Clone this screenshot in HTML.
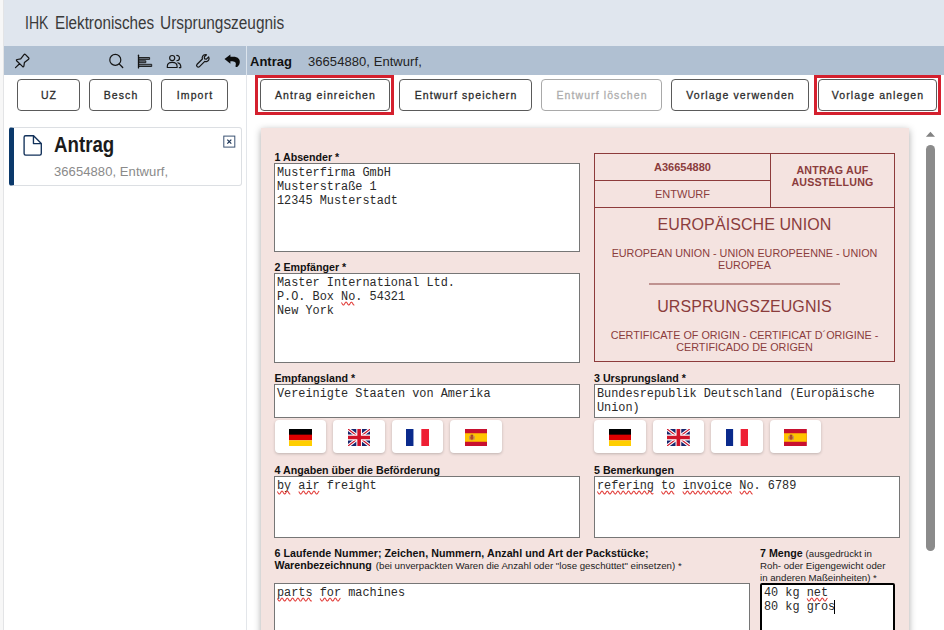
<!DOCTYPE html>
<html>
<head>
<meta charset="utf-8">
<title>IHK Elektronisches Ursprungszeugnis</title>
<style>
*{box-sizing:border-box;margin:0;padding:0}
html,body{width:944px;height:630px;overflow:hidden;background:#fff;font-family:"Liberation Sans",sans-serif;color:#222}
.abs{position:absolute}
#strip{left:0;top:0;width:4px;height:630px;background:#f7f7f7;border-right:1px solid #e3e4e6}
#hdr{left:4px;top:0;width:940px;height:46px;background:#e0e6ee}
.title{left:25.5px;top:13px;font-size:17.6px;color:#3a3a3a;white-space:nowrap;transform-origin:0 0}
#tb{left:4px;top:46px;width:940px;height:29px;background:#b0c0d2}
#vdiv{left:246px;top:46px;width:1px;height:584px;background:#e3e6ea}
#vdiv2{left:246px;top:46px;width:1px;height:29px;background:#dce4ed}
.btn{position:absolute;top:79px;height:32px;border:1px solid #5a5a5a;border-radius:4px;background:#fff;font-size:10.500px;font-weight:normal;-webkit-text-stroke:.28px currentColor;color:#2b2b2b;text-align:center;line-height:31px;letter-spacing:1.100px;padding-left:1px;white-space:nowrap}
.btn.dis{border-color:#a9a9a9;color:#adadad}
.red{position:absolute;top:75px;height:40px;border:3px solid #d4202e}
#card{left:9px;top:127px;width:233px;height:59px;border:1px solid #dcdfe3;border-left:5px solid #0b396b;border-radius:3px;background:#fff}
#form{left:261px;top:128px;width:648px;height:520px;background:#f4e3e0;box-shadow:0 2px 7px rgba(0,0,0,.34)}
.lbl{position:absolute;font-size:10.67px;font-weight:bold;color:#111;white-space:nowrap}
.lbl span{font-weight:normal;font-size:9.700px;color:#1c1c1c}
.ta{position:absolute;background:#fff;border:1px solid #767676;font-family:"Liberation Mono",monospace;font-size:11.87px;line-height:14px;color:#2a2a2a;padding:2px 2px 0 2px;white-space:pre}

#cert{position:absolute;left:594px;top:153px;width:301px;height:209px;border:1px solid #8d3b3b;color:#8b3c3c;text-align:center}
#cert div{position:absolute;white-space:nowrap}
.fb{position:absolute;top:420px;width:51px;height:33px;background:#fff;border-radius:4px;box-shadow:0 1px 3px rgba(0,0,0,.22)}
.fb svg{position:absolute;left:14px;top:9px;width:23px;height:17px}
</style>
</head>
<body>
<div class="abs" id="strip"></div>
<div class="abs" id="hdr"></div>
<div class="abs title" style="left:25px;transform:scaleX(.8)">IHK</div><div class="abs title" style="left:54.600px;transform:scaleX(.866)">Elektronisches</div><div class="abs title" style="left:159.5px;transform:scaleX(.876)">Ursprungszeugnis</div>
<div class="abs" id="tb"></div>
<div class="abs" style="left:250px;top:54px;font-size:13px;font-weight:bold;color:#111;white-space:nowrap">Antrag</div>
<div class="abs" style="left:308px;top:54px;font-size:13px;color:#222;white-space:nowrap;letter-spacing:.06px">36654880, Entwurf,</div>
<svg class="abs" style="left:0;top:46px" width="250" height="29" viewBox="0 46 250 29" fill="none" stroke="#151515" stroke-linecap="round" stroke-linejoin="round">
<path d="M16.6 60.700Q16 59.700 17.200 59.500L20.700 58.900L24 54.600Q24.700 53.900 25.500 54.600L28.600 57.700Q29.300 58.500 28.600 59.200L24.400 62.600L23.900 66Q23.700 67.200 22.700 66.600Z M19.500 63.800L15.500 67.600" stroke-width="1.25"/>
<circle cx="115.300" cy="59.900" r="5.500" stroke-width="1.2"/><path d="M119.400 64.100L122.700 67.500" stroke-width="1.35"/>
<path d="M138.500 55.200V67.900" stroke-width="1.3"/>
<g stroke-width=".9" fill="#151515" fill-opacity=".45"><rect x="139.200" y="57.500" width="10.400" height="1.900"/><rect x="139.200" y="60.800" width="6.600" height="1.900"/><rect x="139.200" y="64.300" width="12.500" height="2.200"/></g>
<g stroke-width="1.15"><circle cx="172.200" cy="58" r="2.550"/><path d="M167.300 67.500v-1.100c0-2.500 1.800-4 4.900-4s4.900 1.500 4.900 4v1.100z"/><path d="M176.800 55.400a2.650 2.650 0 0 1 0 5.300M177.800 62.800c2 .5 3 2 3 4v.8h-1.500"/></g>
<path transform="translate(195.600 53.700) scale(.85)" d="M15.400 3.800l-2.600 2.600-2.200-.4-.4-2.200 2.600-2.600c-2.200-.8-4.600.6-5 3-.1.700 0 1.400.2 2l-6.200 6.200c-.8.800-.8 2 0 2.800s2 .8 2.800 0l6.200-6.200c.6.200 1.300.3 2 .2 2.400-.4 3.800-2.800 2.600-5.400z" stroke-width="1.45"/>
<path d="M224.500 59.100L230.400 54.500V56.800H233.500C237.500 56.800 239.800 59 239.800 62C239.800 63.800 239 65.600 237.200 66.900C236.400 67.400 235.200 66.900 235.500 65.900C236.500 63.200 235.500 61.400 232.500 61.300H230.400V63.800Z" fill="#0c0c0c" stroke="none"/>
</svg>
<svg class="abs" style="left:924px;top:130px" width="14" height="9" viewBox="924 130 14 9"><path d="M925.900 136.800h9.100l-4.550-5z" fill="#828282"/></svg>
<div class="abs" style="left:926px;top:145px;width:9px;height:405.500px;border-radius:4.500px;background:#8b8b8b"></div>
<div class="abs" id="vdiv"></div>
<div class="abs" id="vdiv2"></div>

<div class="btn" style="left:17px;width:63px">UZ</div>
<div class="btn" style="left:89px;width:63px">Besch</div>
<div class="btn" style="left:161px;width:67px">Import</div>

<div class="red" style="left:255px;width:139px"></div>
<div class="btn" style="left:260px;width:130px">Antrag einreichen</div>
<div class="btn" style="left:399px;width:133px">Entwurf speichern</div>
<div class="btn dis" style="left:541px;width:121px">Entwurf löschen</div>
<div class="btn" style="left:671px;width:138px">Vorlage verwenden</div>
<div class="red" style="left:814px;width:127px"></div>
<div class="btn" style="left:818px;width:119px">Vorlage anlegen</div>

<div class="abs" id="card"></div>
<svg class="abs" style="left:20px;top:132px" width="26" height="28" viewBox="20 132 26 28"><path d="M25.600 135.700H33.600L41.300 143.400V153.600Q41.300 155.100 39.800 155.100H25.600Q24.100 155.100 24.100 153.600V137.200Q24.100 135.700 25.600 135.700ZM33.450 135.900V143.550H41.100" fill="none" stroke="#12315a" stroke-width="1.35" stroke-linejoin="round"/></svg>
<div class="abs" style="left:54px;top:132px;font-size:22px;font-weight:bold;color:#1b1b1b;transform:scaleX(.85);transform-origin:0 0;white-space:nowrap">Antrag</div>
<div class="abs" style="left:54px;top:164px;font-size:13px;color:#8a8a8a;white-space:nowrap;letter-spacing:.08px">36654880, Entwurf,</div>
<svg class="abs" style="left:222px;top:134px" width="15" height="15" viewBox="222 134 15 15"><rect x="223.800" y="136.100" width="11" height="11" fill="#fff" stroke="#3b5272" stroke-width="1"/><path d="M227.300 139.600l4 4M231.300 139.600l-4 4" stroke="#1d3557" stroke-width="1.25"/></svg>
<div class="abs" id="form"></div>
<div class="lbl" style="left:274.5px;top:151px">1 Absender *</div>
<div class="ta" style="left:274px;top:163px;width:306px;height:89px">Musterfirma GmbH
Musterstraße 1
12345 Musterstadt</div>
<div class="lbl" style="left:274.5px;top:261px">2 Empfänger *</div>
<div class="ta" style="left:274px;top:273px;width:306px;height:90px">Master International Ltd.
P.O. Box No. 54321
New York</div>
<div class="lbl" style="left:274.5px;top:372px">Empfangsland *</div>
<div class="ta" style="left:274px;top:384px;width:306px;height:34px">Vereinigte Staaten von Amerika</div>
<div class="lbl" style="left:274.5px;top:464px">4 Angaben über die Beförderung</div>
<div class="ta" style="left:274px;top:476px;width:306px;height:62px">by air freight</div>
<div class="lbl" style="left:274.5px;top:547px;letter-spacing:.055px">6 Laufende Nummer; Zeichen, Nummern, Anzahl und Art der Packstücke;</div>
<div class="lbl" style="left:274.5px;top:559px">Warenbezeichnung <span style="margin-left:1px">(bei unverpackten Waren die Anzahl oder "lose geschüttet" einsetzen) *</span></div>
<div class="ta" style="left:274px;top:583px;width:476px;height:60px">parts for machines</div>

<div class="fb" style="left:275px"><svg viewBox="0 0 23 17"><rect width="23" height="6" fill="#000"/><rect y="5.67" width="23" height="5.67" fill="#dd0000"/><rect y="11.33" width="23" height="5.67" fill="#ffce00"/></svg></div>
<div class="fb" style="left:333px;width:52px"><svg style="left:15px;width:22.300px" viewBox="0 0 23 17" preserveAspectRatio="none"><rect width="23" height="17" fill="#17246c"/><path d="M0 0L23 17M23 0L0 17" stroke="#fff" stroke-width="3.400"/><path d="M0 0L23 17M23 0L0 17" stroke="#cf142b" stroke-width="1.200"/><path d="M11.500 0V17M0 8.500H23" stroke="#fff" stroke-width="5.800"/><path d="M11.500 0V17M0 8.500H23" stroke="#d01228" stroke-width="3.700"/></svg></div>
<div class="fb" style="left:392px"><svg viewBox="0 0 23 17"><rect width="7.67" height="17" fill="#0a2a8c"/><rect x="7.67" width="7.67" height="17" fill="#fff"/><rect x="15.33" width="7.67" height="17" fill="#ee1f34"/></svg></div>
<div class="fb" style="left:450px;width:52px"><svg style="left:15px;width:22.300px" viewBox="0 0 23 17" preserveAspectRatio="none"><rect width="23" height="17" fill="#c8102e"/><rect y="4.25" width="23" height="8.5" fill="#ffc400"/><ellipse cx="7.100" cy="8.600" rx="2.700" ry="3" fill="#d9a03a"/><ellipse cx="7.100" cy="8.800" rx="1.700" ry="2" fill="#b0482a"/><rect x="5.900" y="5.700" width="2.400" height="1.300" fill="#a5462a"/><rect x="4.300" y="7" width=".8" height="3.600" fill="#b9936a"/><rect x="9.100" y="7" width=".8" height="3.600" fill="#b9936a"/></svg></div>
<div class="fb" style="left:594px;width:52px"><svg style="left:15px;width:22px" viewBox="0 0 23 17" preserveAspectRatio="none"><rect width="23" height="6" fill="#000"/><rect y="5.67" width="23" height="5.67" fill="#dd0000"/><rect y="11.33" width="23" height="5.67" fill="#ffce00"/></svg></div>
<div class="fb" style="left:653px;width:51px"><svg style="left:14px;width:22.800px" viewBox="0 0 23 17" preserveAspectRatio="none"><rect width="23" height="17" fill="#17246c"/><path d="M0 0L23 17M23 0L0 17" stroke="#fff" stroke-width="3.400"/><path d="M0 0L23 17M23 0L0 17" stroke="#cf142b" stroke-width="1.200"/><path d="M11.500 0V17M0 8.500H23" stroke="#fff" stroke-width="5.800"/><path d="M11.500 0V17M0 8.500H23" stroke="#d01228" stroke-width="3.700"/></svg></div>
<div class="fb" style="left:711px;width:52px"><svg style="left:15px;width:22px" viewBox="0 0 23 17" preserveAspectRatio="none"><rect width="7.67" height="17" fill="#0a2a8c"/><rect x="7.67" width="7.67" height="17" fill="#fff"/><rect x="15.33" width="7.67" height="17" fill="#ee1f34"/></svg></div>
<div class="fb" style="left:770px;width:51px"><svg style="left:14px;width:22.800px" viewBox="0 0 23 17" preserveAspectRatio="none"><rect width="23" height="17" fill="#c8102e"/><rect y="4.25" width="23" height="8.5" fill="#ffc400"/><ellipse cx="7.100" cy="8.600" rx="2.700" ry="3" fill="#d9a03a"/><ellipse cx="7.100" cy="8.800" rx="1.700" ry="2" fill="#b0482a"/><rect x="5.900" y="5.700" width="2.400" height="1.300" fill="#a5462a"/><rect x="4.300" y="7" width=".8" height="3.600" fill="#b9936a"/><rect x="9.100" y="7" width=".8" height="3.600" fill="#b9936a"/></svg></div>
<div id="cert">
<div style="left:0;top:26px;width:175px;height:1px;background:#8d3b3b"></div>
<div style="left:0;top:53px;width:299px;height:1px;background:#8d3b3b"></div>
<div style="left:175px;top:0;width:1px;height:53px;background:#8d3b3b"></div>
<div style="left:0;width:175px;top:7px;font-size:11px;font-weight:bold">A36654880</div>
<div style="left:0;width:175px;top:33.500px;font-size:11px">ENTWURF</div>
<div style="left:176px;width:123px;top:10px;font-size:10.67px;font-weight:bold;line-height:12px;letter-spacing:.2px">ANTRAG AUF<br>AUSSTELLUNG</div>
<div style="left:0;width:299px;top:61.500px;font-size:16px;letter-spacing:.08px">EUROPÄISCHE UNION</div>
<div style="left:0;width:299px;top:93px;font-size:10.8px;line-height:12px">EUROPEAN UNION - UNION EUROPEENNE - UNION<br>EUROPEA</div>
<div style="left:54px;top:129px;width:191px;height:2px;background:#bf9290"></div>
<div style="left:0;width:299px;top:143.500px;font-size:16px;letter-spacing:.08px">URSPRUNGSZEUGNIS</div>
<div style="left:0;width:299px;top:175px;font-size:10.8px;line-height:12px">CERTIFICATE OF ORIGIN - CERTIFICAT D´ORIGINE -<br>CERTIFICADO DE ORIGEN</div>
</div>

<div class="lbl" style="left:594px;top:372px">3 Ursprungsland *</div>
<div class="ta" style="left:594px;top:384px;width:306px;height:34px">Bundesrepublik Deutschland (Europäische
Union)</div>
<div class="lbl" style="left:594px;top:464px">5 Bemerkungen</div>
<div class="ta" style="left:594px;top:476px;width:306px;height:62px">refering to invoice No. 6789</div>
<div class="lbl" style="left:760px;top:547px">7 Menge <span>(ausgedrückt in</span></div>
<div class="lbl" style="left:760px;top:559px"><span>Roh- oder Eigengewicht oder</span></div>
<div class="lbl" style="left:760px;top:571px"><span>in anderen Maßeinheiten) *</span></div>
<div class="ta" style="left:760px;top:583px;width:135px;height:60px;border:2px solid #000;border-radius:2px;padding:1px 2px 0 2px">40 kg net
80 kg gros</div>

<div class="abs" style="left:833.500px;top:600px;width:1px;height:14px;background:#000"></div>
<svg class="abs" style="left:0;top:0;pointer-events:none" width="944" height="630" viewBox="0 0 944 630"><path d="M341.4 302.46L341.9 303.20L342.4 304.08L342.9 304.79L343.4 305.10L343.9 304.89L344.4 304.25L344.9 303.38L345.4 302.59L345.9 302.14L346.4 302.19L346.9 302.73L347.4 303.56L347.9 304.40L348.4 304.97L348.9 305.08L349.4 304.68L349.9 303.91L350.4 303.04L350.9 302.36L351.4 302.10L351.9 302.36L352.4 303.04L352.9 303.91L353.4 304.68L353.9 305.08L354.4 304.97M277.3 491.46L277.8 492.20L278.3 493.08L278.8 493.79L279.3 494.10L279.8 493.89L280.3 493.25L280.8 492.38L281.3 491.59L281.8 491.14L282.3 491.19L282.8 491.73L283.3 492.56L283.8 493.40L284.3 493.97L284.8 494.08L285.3 493.68L285.8 492.91L286.3 492.04L286.8 491.36L287.3 491.10L287.8 491.36L288.3 492.04L288.8 492.91L289.3 493.68L289.8 494.08L290.3 493.97M298.7 491.46L299.2 492.20L299.7 493.08L300.2 493.79L300.7 494.10L301.2 493.89L301.7 493.25L302.2 492.38L302.7 491.59L303.2 491.14L303.7 491.19L304.2 491.73L304.7 492.56L305.2 493.40L305.7 493.97L306.2 494.08L306.7 493.68L307.2 492.91L307.7 492.04L308.2 491.36L308.7 491.10L309.2 491.36L309.7 492.04L310.2 492.91L310.7 493.68L311.2 494.08L311.7 493.97L312.2 493.40L312.7 492.56L313.2 491.73L313.7 491.19L314.2 491.14L314.7 491.59L315.2 492.38L315.7 493.25L316.2 493.89L316.7 494.10L317.2 493.79L317.7 493.08L318.2 492.20L318.7 491.46L319.2 491.11M277.3 598.46L277.8 599.20L278.3 600.08L278.8 600.79L279.3 601.10L279.8 600.89L280.3 600.25L280.8 599.38L281.3 598.59L281.8 598.14L282.3 598.19L282.8 598.73L283.3 599.56L283.8 600.40L284.3 600.97L284.8 601.08L285.3 600.68L285.8 599.91L286.3 599.04L286.8 598.36L287.3 598.10L287.8 598.36L288.3 599.04L288.8 599.91L289.3 600.68L289.8 601.08L290.3 600.97L290.8 600.40L291.3 599.56L291.8 598.73L292.3 598.19L292.8 598.14L293.3 598.59L293.8 599.38L294.3 600.25L294.8 600.89L295.3 601.10L295.8 600.79L296.3 600.08L296.8 599.20L297.3 598.46L297.8 598.11L298.3 598.27L298.8 598.88L299.3 599.73L299.8 600.55L300.3 601.03L300.8 601.03L301.3 600.55L301.8 599.73L302.3 598.88L302.8 598.27L303.3 598.11L303.8 598.46L304.3 599.20L304.8 600.08L305.3 600.79L305.8 601.10L306.3 600.89L306.8 600.25L307.3 599.38L307.8 598.59L308.3 598.14L308.8 598.19L309.3 598.73L309.8 599.56L310.3 600.40L310.8 600.97L311.3 601.08L311.8 600.68M320.0 598.46L320.5 599.20L321.0 600.08L321.5 600.79L322.0 601.10L322.5 600.89L323.0 600.25L323.5 599.38L324.0 598.59L324.5 598.14L325.0 598.19L325.5 598.73L326.0 599.56L326.5 600.40L327.0 600.97L327.5 601.08L328.0 600.68L328.5 599.91L329.0 599.04L329.5 598.36L330.0 598.10L330.5 598.36L331.0 599.04L331.5 599.91L332.0 600.68L332.5 601.08L333.0 600.97L333.5 600.40L334.0 599.56L334.5 598.73L335.0 598.19L335.5 598.14L336.0 598.59L336.5 599.38L337.0 600.25L337.5 600.89L338.0 601.10L338.5 600.79L339.0 600.08L339.5 599.20L340.0 598.46L340.5 598.11M597.3 491.46L597.8 492.20L598.3 493.08L598.8 493.79L599.3 494.10L599.8 493.89L600.3 493.25L600.8 492.38L601.3 491.59L601.8 491.14L602.3 491.19L602.8 491.73L603.3 492.56L603.8 493.40L604.3 493.97L604.8 494.08L605.3 493.68L605.8 492.91L606.3 492.04L606.8 491.36L607.3 491.10L607.8 491.36L608.3 492.04L608.8 492.91L609.3 493.68L609.8 494.08L610.3 493.97L610.8 493.40L611.3 492.56L611.8 491.73L612.3 491.19L612.8 491.14L613.3 491.59L613.8 492.38L614.3 493.25L614.8 493.89L615.3 494.10L615.8 493.79L616.3 493.08L616.8 492.20L617.3 491.46L617.8 491.11L618.3 491.27L618.8 491.88L619.3 492.73L619.8 493.55L620.3 494.03L620.8 494.03L621.3 493.55L621.8 492.73L622.3 491.88L622.8 491.27L623.3 491.11L623.8 491.46L624.3 492.20L624.8 493.08L625.3 493.79L625.8 494.10L626.3 493.89L626.8 493.25L627.3 492.38L627.8 491.59L628.3 491.14L628.8 491.19L629.3 491.73L629.8 492.56L630.3 493.40L630.8 493.97L631.3 494.08L631.8 493.68L632.3 492.91L632.8 492.04L633.3 491.36L633.8 491.10L634.3 491.36L634.8 492.04L635.3 492.91L635.8 493.68L636.3 494.08L636.8 493.97L637.3 493.40L637.8 492.56L638.3 491.73L638.8 491.19L639.3 491.14L639.8 491.59L640.3 492.38L640.8 493.25L641.3 493.89L641.8 494.10L642.3 493.79L642.8 493.08L643.3 492.20L643.8 491.46L644.3 491.11L644.8 491.27L645.3 491.88L645.8 492.73L646.3 493.55L646.8 494.03L647.3 494.03L647.8 493.55L648.3 492.73L648.8 491.88L649.3 491.27L649.8 491.11L650.3 491.46L650.8 492.20L651.3 493.08L651.8 493.79L652.3 494.10L652.8 493.89L653.3 493.25M661.4 491.46L661.9 492.20L662.4 493.08L662.9 493.79L663.4 494.10L663.9 493.89L664.4 493.25L664.9 492.38L665.4 491.59L665.9 491.14L666.4 491.19L666.9 491.73L667.4 492.56L667.9 493.40L668.4 493.97L668.9 494.08L669.4 493.68L669.9 492.91L670.4 492.04L670.9 491.36L671.4 491.10L671.9 491.36L672.4 492.04L672.9 492.91L673.4 493.68L673.9 494.08L674.4 493.97M682.7 491.46L683.2 492.20L683.7 493.08L684.2 493.79L684.7 494.10L685.2 493.89L685.7 493.25L686.2 492.38L686.7 491.59L687.2 491.14L687.7 491.19L688.2 491.73L688.7 492.56L689.2 493.40L689.7 493.97L690.2 494.08L690.7 493.68L691.2 492.91L691.7 492.04L692.2 491.36L692.7 491.10L693.2 491.36L693.7 492.04L694.2 492.91L694.7 493.68L695.2 494.08L695.7 493.97L696.2 493.40L696.7 492.56L697.2 491.73L697.7 491.19L698.2 491.14L698.7 491.59L699.2 492.38L699.7 493.25L700.2 493.89L700.7 494.10L701.2 493.79L701.7 493.08L702.2 492.20L702.7 491.46L703.2 491.11L703.7 491.27L704.2 491.88L704.7 492.73L705.2 493.55L705.7 494.03L706.2 494.03L706.7 493.55L707.2 492.73L707.7 491.88L708.2 491.27L708.7 491.11L709.2 491.46L709.7 492.20L710.2 493.08L710.7 493.79L711.2 494.10L711.7 493.89L712.2 493.25L712.7 492.38L713.2 491.59L713.7 491.14L714.2 491.19L714.7 491.73L715.2 492.56L715.7 493.40L716.2 493.97L716.7 494.08L717.2 493.68L717.7 492.91L718.2 492.04L718.7 491.36L719.2 491.10L719.7 491.36L720.2 492.04L720.7 492.91L721.2 493.68L721.7 494.08L722.2 493.97L722.7 493.40L723.2 492.56L723.7 491.73L724.2 491.19L724.7 491.14L725.2 491.59L725.7 492.38L726.2 493.25L726.7 493.89L727.2 494.10L727.7 493.79L728.2 493.08L728.7 492.20L729.2 491.46L729.7 491.11L730.2 491.27L730.7 491.88L731.2 492.73L731.7 493.55M739.7 491.46L740.2 492.20L740.7 493.08L741.2 493.79L741.7 494.10L742.2 493.89L742.7 493.25L743.2 492.38L743.7 491.59L744.2 491.14L744.7 491.19L745.2 491.73L745.7 492.56L746.2 493.40L746.7 493.97L747.2 494.08L747.7 493.68L748.2 492.91L748.7 492.04L749.2 491.36L749.7 491.10L750.2 491.36L750.7 492.04L751.2 492.91L751.7 493.68L752.2 494.08L752.7 493.97M807.0 598.46L807.5 599.20L808.0 600.08L808.5 600.79L809.0 601.10L809.5 600.89L810.0 600.25L810.5 599.38L811.0 598.59L811.5 598.14L812.0 598.19L812.5 598.73L813.0 599.56L813.5 600.40L814.0 600.97L814.5 601.08L815.0 600.68L815.5 599.91L816.0 599.04L816.5 598.36L817.0 598.10L817.5 598.36L818.0 599.04L818.5 599.91L819.0 600.68L819.5 601.08L820.0 600.97L820.5 600.40L821.0 599.56L821.5 598.73L822.0 598.19L822.5 598.14L823.0 598.59L823.5 599.38L824.0 600.25L824.5 600.89L825.0 601.10L825.5 600.79L826.0 600.08L826.5 599.20L827.0 598.46L827.5 598.11" fill="none" stroke="#e2403d" stroke-width="1.05" stroke-linejoin="round"/></svg>
</body>
</html>
